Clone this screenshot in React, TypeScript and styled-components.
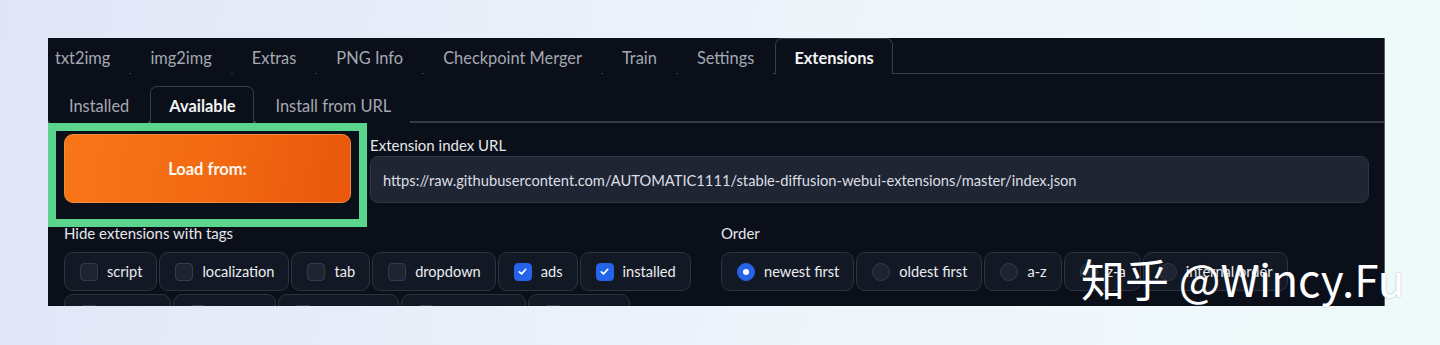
import React from "react";
import styled, { createGlobalStyle } from "styled-components";

const GlobalStyle = createGlobalStyle`
  html, body {
    margin: 0;
    padding: 0;
  }
  body {
    width: 1440px;
    height: 345px;
    overflow: hidden;
    font-family: Lato, "Liberation Sans", sans-serif;
  }
`;

const Page = styled.div`
  position: relative;
  width: 1440px;
  height: 345px;
  box-sizing: border-box;
  padding: 38px 0 0 48px;
  background: linear-gradient(100deg, #e2e5f7 0%, #e9edf9 30%, #eff5fb 60%, #eefafa 100%);
`;

const Panel = styled.div`
  width: 1337px;
  height: 268px;
  box-sizing: border-box;
  background: #0b0f19;
  border-right: 1px solid #5b606b;
  overflow: hidden;
`;

const TopNav = styled.div`
  display: flex;
  gap: 2px;
  height: 36px;
  box-sizing: border-box;
  margin-left: -12px;
  border-bottom: 1px solid #363c48;
`;

const SubNav = styled.div`
  display: flex;
  gap: 2px;
  box-sizing: border-box;
  padding: 12px 0 0 2px;
  border-bottom: 2px solid #343a47;
`;

const Tab = styled.div<{ $active?: boolean; $h: number; $overlap: number }>`
  display: flex;
  align-items: center;
  box-sizing: border-box;
  height: ${({ $h }) => $h}px;
  margin-bottom: -${({ $overlap }) => $overlap}px;
  padding: 1px 18px 0;
  font-size: 16.4px;
  white-space: nowrap;
  color: ${({ $active }) => ($active ? "#f3f4f6" : "#a4a9b3")};
  font-weight: ${({ $active }) => ($active ? 700 : 400)};
  background: #0b0f19;
  border: 1px solid ${({ $active }) => ($active ? "#363c48" : "transparent")};
  border-bottom: none;
  border-radius: 7px 7px 0 0;
`;

const Content = styled.div`
  padding: 11px 15px 0 16px;
`;

const TopRow = styled.div`
  display: flex;
  gap: 19px;
`;

const ButtonWrap = styled.div`
  position: relative;
  flex: 0 0 287px;
`;

const Highlight = styled.div`
  position: absolute;
  left: -16px;
  top: -11px;
  width: 319px;
  height: 104px;
  box-sizing: border-box;
  border: 8px solid #5bd58d;
  pointer-events: none;
`;

const LoadButton = styled.button`
  width: 287px;
  height: 69px;
  padding-top: 2px;
  border: 1px solid #f58a3c;
  border-radius: 9px;
  background: linear-gradient(100deg, #f97618 0%, #f26a12 50%, #ea570b 100%);
  color: #fff7ef;
  font-family: Lato, "Liberation Sans", sans-serif;
  font-size: 16.5px;
  font-weight: 700;
`;

const Field = styled.div`
  flex: 1;
  display: flex;
  flex-direction: column;
`;

const Label = styled.div`
  font-size: 15px;
  line-height: 20px;
  padding-top: 1px;
  color: #e5e7eb;
  white-space: nowrap;
`;

const UrlInput = styled.div`
  display: flex;
  align-items: center;
  height: 47px;
  box-sizing: border-box;
  margin-top: 1px;
  padding: 1px 12px 0;
  background: #1f2532;
  border: 1px solid #2e3543;
  border-radius: 8px;
  font-size: 14.7px;
  color: #dcdfe5;
  white-space: nowrap;
`;

const OptionsRow = styled.div`
  display: grid;
  grid-template-columns: 645px 1fr;
  gap: 12px;
  margin-top: 20px;
`;

const Group = styled.div`
  display: flex;
  flex-direction: column;
`;

const GroupLabel = styled(Label)`
  line-height: 18px;
`;

const Chips = styled.div`
  display: flex;
  flex-wrap: wrap;
  gap: 3px 2px;
  margin-top: 10px;
`;

const Chip = styled.label`
  display: flex;
  align-items: center;
  gap: 9px;
  height: 39px;
  box-sizing: border-box;
  padding: 0 14px 0 15px;
  background: #121824;
  border: 1px solid #2b3240;
  border-radius: 9px;
  font-size: 14.6px;
  color: #eceef2;
  white-space: nowrap;
`;

const Box = styled.span<{ $checked?: boolean }>`
  display: flex;
  align-items: center;
  justify-content: center;
  width: 18px;
  height: 18px;
  box-sizing: border-box;
  border-radius: 4px;
  background: ${({ $checked }) => ($checked ? "#2563eb" : "#1e2431")};
  border: 1px solid ${({ $checked }) => ($checked ? "#2563eb" : "#343b49")};
`;

const Dot = styled.span<{ $checked?: boolean }>`
  display: flex;
  align-items: center;
  justify-content: center;
  width: 18px;
  height: 18px;
  box-sizing: border-box;
  border-radius: 50%;
  background: ${({ $checked }) => ($checked ? "#2563eb" : "#1e2431")};
  border: 1px solid ${({ $checked }) => ($checked ? "#2563eb" : "#343b49")};

  &::after {
    content: "";
    display: ${({ $checked }) => ($checked ? "block" : "none")};
    width: 6px;
    height: 6px;
    border-radius: 50%;
    background: #ffffff;
  }
`;

const Watermark = styled.div`
  position: absolute;
  left: 1081px;
  top: 254px;
  font-family: "Noto Sans CJK SC", "Noto Sans", sans-serif;
  font-size: 44px;
  line-height: 48px;
  color: #ffffff;
  white-space: nowrap;
  text-shadow: 0 0 2px rgba(40, 50, 70, 0.35);
  pointer-events: none;
`;

const topTabs = ["txt2img", "img2img", "Extras", "PNG Info", "Checkpoint Merger", "Train", "Settings", "Extensions"];
const subTabs = ["Installed", "Available", "Install from URL"];
const tags: { name: string; checked?: boolean }[] = [
  { name: "script" },
  { name: "localization" },
  { name: "tab" },
  { name: "dropdown" },
  { name: "ads", checked: true },
  { name: "installed", checked: true },
  { name: "training" },
  { name: "models" },
  { name: "UI related" },
  { name: "prompting" },
  { name: "editing" },
];
const orders = ["newest first", "oldest first", "a-z", "z-a", "internal order"];

function Check() {
  return (
    <svg width="11" height="11" viewBox="0 0 12 12" fill="none">
      <path d="M2.5 6.3 L5 8.6 L9.6 3.6" stroke="#ffffff" strokeWidth="1.8" strokeLinecap="round" strokeLinejoin="round" />
    </svg>
  );
}

export default function App() {
  return (
    <>
      <GlobalStyle />
      <Page>
        <Panel>
          <TopNav>
            {topTabs.map((t) => (
              <Tab key={t} $h={36} $overlap={1} $active={t === "Extensions"}>
                {t}
              </Tab>
            ))}
          </TopNav>
          <SubNav>
            {subTabs.map((t) => (
              <Tab key={t} $h={37} $overlap={2} $active={t === "Available"}>
                {t}
              </Tab>
            ))}
          </SubNav>
          <Content>
            <TopRow>
              <ButtonWrap>
                <LoadButton>Load from:</LoadButton>
                <Highlight />
              </ButtonWrap>
              <Field>
                <Label>Extension index URL</Label>
                <UrlInput>
                  https://raw.githubusercontent.com/AUTOMATIC1111/stable-diffusion-webui-extensions/master/index.json
                </UrlInput>
              </Field>
            </TopRow>
            <OptionsRow>
              <Group>
                <GroupLabel>Hide extensions with tags</GroupLabel>
                <Chips>
                  {tags.map((t) => (
                    <Chip key={t.name}>
                      <Box $checked={t.checked}>{t.checked ? <Check /> : null}</Box>
                      {t.name}
                    </Chip>
                  ))}
                </Chips>
              </Group>
              <Group>
                <GroupLabel>Order</GroupLabel>
                <Chips>
                  {orders.map((o, i) => (
                    <Chip key={o}>
                      <Dot $checked={i === 0} />
                      {o}
                    </Chip>
                  ))}
                </Chips>
              </Group>
            </OptionsRow>
          </Content>
        </Panel>
        <Watermark>知乎 @Wincy.Fu</Watermark>
      </Page>
    </>
  );
}
